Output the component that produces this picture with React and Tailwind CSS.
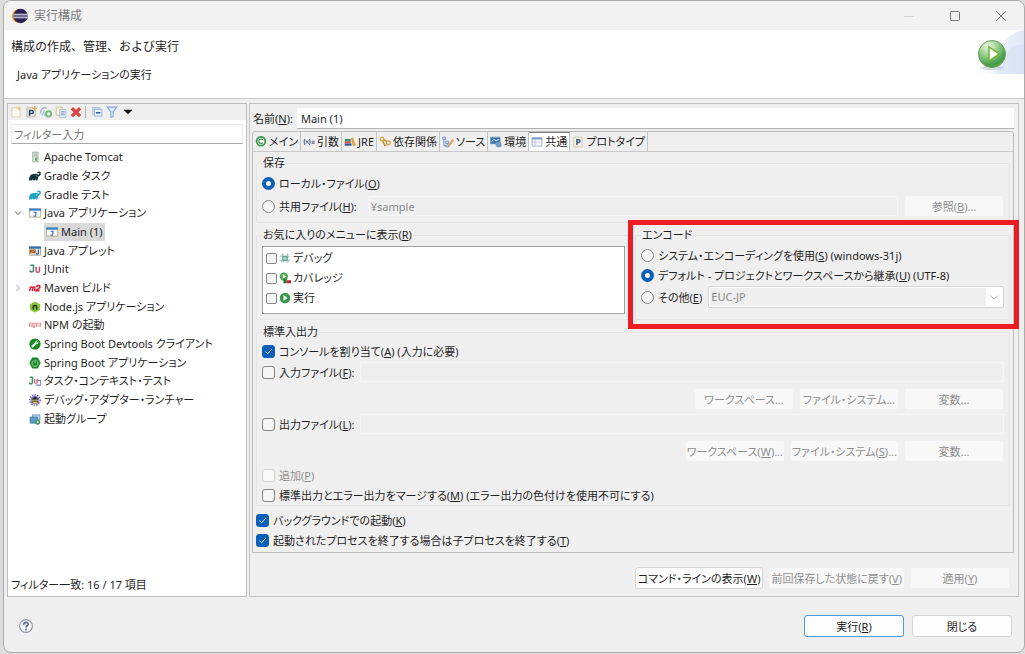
import React, { useState } from 'react';

// Renders a label and underlines its access key, e.g. "適用(Y)"
const Label = ({ text }) => {
    const m = text.match(/^(.*?\()([A-Z])(\).*)$/);
    if (!m) return <>{text}</>;
    return <>{m[1]}<u className="underline-offset-1">{m[2]}</u>{m[3]}</>;
};

const Svg = ({ children, size = 'size-3', box = '0 0 16 16' }) => (
    <svg viewBox={box} className={`${size} shrink-0`} fill="none" aria-hidden="true">{children}</svg>
);

const EclipseLogo = () => (
    <Svg size="size-4">
        <circle cx="7" cy="8" r="7" fill="#f7941e" />
        <circle cx="8.6" cy="8" r="7.2" fill="#2c2255" />
        <path d="M1.500 6.200h14.200M1.500 9.800h14.200" stroke="#e8e6f0" strokeWidth="1.100" />
        <path d="M1.300 8h14.500" stroke="#b9b4cf" strokeWidth="1.200" />
    </Svg>
);

const RunBanner = () => (
    <svg viewBox="0 0 48 44" className="h-11 w-12 shrink-0" fill="none" aria-hidden="true">
        <defs>
            <radialGradient id="ball" cx="0.35" cy="0.2" r="0.9">
                <stop offset="0" stopColor="#f0fae8" />
                <stop offset="0.45" stopColor="#8fca80" />
                <stop offset="0.8" stopColor="#3f9a4a" />
                <stop offset="1" stopColor="#6fc030" />
            </radialGradient>
            <linearGradient id="wave" x1="0" x2="1">
                <stop offset="0" stopColor="#fff" />
                <stop offset="1" stopColor="#dfe7f8" />
            </linearGradient>
        </defs>
        <path d="M0 44C16 38 22 4 48 0V44Z" fill="url(#wave)" />
        <path d="M20 44C26 20 34 16 48 14V44Z" fill="#d5e0f5" opacity="0.6" />
        <ellipse cx="16" cy="38" rx="12" ry="2" fill="#c9cfd4" opacity="0.7" />
        <circle cx="16" cy="24" r="13.5" fill="url(#ball)" stroke="#6c9a5c" />
        <path d="M13 17v14l10-7Z" fill="#fff" stroke="#6fb52c" strokeWidth="1.5" />
    </svg>
);

const PageIcon = () => (
    <Svg>
        <path d="M2.500 2.500h8l3 3v9h-11z" fill="#fffdf4" stroke="#cdc3a4" />
        <path d="M12 0v6M9 3h6" stroke="#e8c46c" strokeWidth="1.500" />
    </Svg>
);
const ProtoNewIcon = () => (
    <Svg>
        <path d="M2.500 2.500h8l3 3v9h-11z" fill="#f3f0e4" stroke="#a8a088" />
        <path d="M6 13V6h3a2 2 0 0 1 0 4H6" stroke="#26456e" strokeWidth="2" />
        <path d="M13 0v6M10 3h6" stroke="#d89f2c" strokeWidth="1.500" />
    </Svg>
);
const LinkProtoIcon = () => (
    <Svg>
        <path d="M1 10C0 4 5 1 9 3M3 12l3-6M6 13l2-4" stroke="#a9bcd4" strokeWidth="2" />
        <circle cx="11.500" cy="10.500" r="3.500" fill="#fff" stroke="#6dbb78" strokeWidth="2.500" />
    </Svg>
);
const CopyIcon = () => (
    <Svg>
        <path d="M1.500 1.500h8v11h-8z" fill="#f7f0d8" stroke="#c9b98a" />
        <path d="M6.500 4.500h8v11h-8z" fill="#e4edf8" stroke="#9db1cc" />
        <path d="M8 7.500h5M8 9.500h5M8 11.500h5" stroke="#6d8fc0" />
    </Svg>
);
const DeleteIcon = () => (
    <Svg><path d="M2.500 3l11 10.500M13.500 3l-11 10.500" stroke="#dc4444" strokeWidth="4.500" /></Svg>
);
const CollapseIcon = () => (
    <Svg>
        <path d="M2.500 12V2.500H13" stroke="#a3bedd" strokeWidth="1.500" />
        <path d="M4.500 4.500h10v9h-10z" fill="#e8f1fb" stroke="#8fb0d8" strokeWidth="1.200" />
        <path d="M6.500 9h6" stroke="#2d5f9e" strokeWidth="1.800" />
    </Svg>
);
const FilterIcon = () => (
    <Svg><path d="M1.500 1.500h13L9.500 8v6l-3 1.500V8z" fill="#dcebfa" stroke="#86abd9" strokeWidth="1.500" /></Svg>
);

const TomcatIcon = () => (
    <Svg>
        <path d="M5 1.500h7v13H5z" fill="#e6ebe2" stroke="#8d9a8c" />
        <path d="M6.500 4h4M6.500 6.500h4" stroke="#7c8c83" />
        <path d="M8 8.500h3V13H8z" fill="#5cb85c" />
    </Svg>
);
const Elephant = ({ color }) => (
    <svg viewBox="0 0 16 14" className="h-3 w-3 shrink-0" aria-hidden="true">
        <path fill={color} d="M0 13C0 8 2 4 7 4.500c2-1 3.500-.5 5 .5 1.500.3 2.300-.8 1.600-1.700-.6-.7-1.500-.2-1.800.4L11 2.300C12 .7 14.500.6 15.500 2.300c1 2-.3 4.500-3 5.700L11.500 11v2H9.700c-.3-1.600-1.800-1.600-2.200 0H5.700c-.3-1.600-1.800-1.600-2.200 0z" />
        <path d="M9 6.500l2 .8" stroke="#fff" strokeWidth=".8" />
    </svg>
);
const JavaAppIcon = () => (
    <Svg>
        <path d="M.5 2.500h15v11H.5z" fill="#f5f9fb" stroke="#a59a6c" />
        <path d="M0 2h16v3H0z" fill="#3b83c4" />
        <path d="M6 7h4M9 7v4.500c0 1.200-2.500 1.200-3 0" stroke="#3c6ea6" strokeWidth="1.500" />
    </Svg>
);
const AppletIcon = () => (
    <Svg>
        <path d="M.5 2.500h15v11H.5z" fill="#e7f2fb" stroke="#968a62" />
        <path d="M0 2h16v3H0z" fill="#3273b4" />
        <path d="M1 6h8v5H1z" fill="#a65d21" />
        <path d="M2 11l6-4" stroke="#cf9344" strokeWidth="1.500" />
        <path d="M12.500 6v5c0 1.500-2.500 1.500-3 0" stroke="#28538a" strokeWidth="1.500" />
    </Svg>
);
const JUnitIcon = () => (
    <Svg>
        <path d="M2 3h5M6 3v7c0 2.500-4.500 2.500-5 0" stroke="#2e8b6d" strokeWidth="2" />
        <path d="M9.500 6v4.500c0 2.500 4.500 2.500 4.500 0V6M8.500 6h2M13 6h2" stroke="#d2425c" strokeWidth="1.800" />
    </Svg>
);
const MavenIcon = () => (
    <Svg>
        <path d="M1 12l1-6M2 8c1-2 3-2 3 0l-.6 4M5 8c1-2 3.300-2 3 0l-.6 4" stroke="#e3192d" strokeWidth="2" />
        <path d="M10 6.500C11 4 15 4.500 14.500 7c-.3 1.500-4 3-5 4.500H14" stroke="#e3192d" strokeWidth="2.100" />
    </Svg>
);
const NodeIcon = () => (
    <Svg>
        <path d="M8 .5l6.800 3.700v7.600L8 15.500l-6.800-3.700V4.200z" fill="#8cc63f" />
        <path d="M5.800 11.500V5.500M5.800 7c1-1.600 4.400-1.600 4.400.6v3.900" stroke="#26351b" strokeWidth="2" />
    </Svg>
);
const NpmIcon = () => (
    <Svg>
        <path d="M0 5h16v5H8v1.500H5V10H0z" fill="#e08a8e" />
        <path d="M2 9V6.500h2V9M6.500 10V6.500h2V9M11 9V6.500h3V9M12.500 6.500V9" stroke="#fff" />
    </Svg>
);
const DevtoolsIcon = () => (
    <Svg>
        <circle cx="8" cy="8" r="7.500" fill="#148a1f" />
        <path d="M4 12l5-5" stroke="#fff" strokeWidth="2.800" />
        <path d="M11.500 3.500L9.500 5.500l1 1 2-2c.8 3-2 4.300-4 3-1-2.500.5-4.500 3-4z" fill="#fff" />
    </Svg>
);
const BootIcon = () => (
    <Svg>
        <path d="M4.300.8h7.400L15.600 8l-3.900 7.200H4.300L.4 8z" fill="#178a26" />
        <path d="M6 5a4 4 0 1 0 4 0M8 3.500V8" stroke="#b5dcb5" strokeWidth="1.200" />
    </Svg>
);
const TaskTestIcon = () => (
    <Svg>
        <path d="M1 3h4M4.500 3v7c0 2.500-3.500 2.500-4 0" stroke="#3a9461" strokeWidth="2" />
        <path d="M7.500 5v4.500c0 2 3.500 2 3.500 0V5" stroke="#cf5a70" strokeWidth="1.600" />
        <path d="M10 7.500h5.500v6H9" stroke="#8a83c0" strokeWidth="1.500" />
    </Svg>
);
const DapIcon = () => (
    <Svg>
        <circle cx="8" cy="8" r="6" fill="#9a92d8" />
        <circle cx="8" cy="8" r="7" stroke="#5a52a8" strokeWidth="1.500" strokeDasharray="2 1.500" />
        <path d="M3.500 6l9 5M12.500 6l-9 5M8 4v3" stroke="#1c1c28" strokeWidth="1.500" />
        <ellipse cx="8" cy="9.500" rx="3" ry="3.200" fill="#edc52f" />
        <path d="M5.500 9.500h5" stroke="#1c1c28" strokeWidth="1.200" />
        <circle cx="8" cy="5.500" r="2.200" fill="#1c1c28" />
    </Svg>
);
const GroupIcon = () => (
    <Svg>
        <path d="M4.500 2.500h10v7h-10z" fill="#bfdcf2" stroke="#4685b8" />
        <path d="M1.500 5.500h10v8h-10z" fill="#5c9bcb" stroke="#35709f" />
        <circle cx="11.500" cy="12" r="3.500" fill="#3d9b50" />
        <path d="M10.500 10v4l3-2z" fill="#fff" />
    </Svg>
);

const MainTabIcon = () => (
    <Svg>
        <circle cx="8" cy="7" r="5.800" fill="#fff" stroke="#3f9a55" strokeWidth="2.500" />
        <path d="M10.500 5.300a3 3 0 1 0 0 3.400" stroke="#3f9a55" strokeWidth="1.700" />
    </Svg>
);
const ArgsIcon = () => (
    <Svg>
        <path d="M2.500 4Q.5 8 2.500 12M8.500 4q2 4 0 8M3.500 6l4 4M7.500 6l-4 4M11.500 7h4M11.500 9.500h4" stroke="#50658a" strokeWidth="1.400" />
    </Svg>
);
const JreIcon = () => (
    <Svg>
        <path d="M1 4h8v3H1z" fill="#2f8f83" />
        <path d="M1 7h8v3H1z" fill="#d7533f" />
        <path d="M1 10h9v3H1z" fill="#31618f" />
        <path d="M9 3l3-1 4 11h-4z" fill="#e0a53a" />
    </Svg>
);
const DepsIcon = () => (
    <Svg>
        <circle cx="4" cy="4" r="2.500" stroke="#dba63a" strokeWidth="1.800" />
        <circle cx="12.500" cy="9" r="2.500" stroke="#dba63a" strokeWidth="1.800" />
        <path d="M5 6.500l3 7M7 5l3.500 2.500M8 13l2-1" stroke="#c68c25" strokeWidth="1.800" />
    </Svg>
);
const SourceIcon = () => (
    <Svg>
        <path d="M1 1.500h4v3H1zM5 7h4v3H5zM5 12h4v2.500H5zM2.500 4.500V13H5" fill="#d6e4f4" stroke="#5a80b8" />
        <path d="M9 13l6-8" stroke="#e3a65a" strokeWidth="3" />
    </Svg>
);
const EnvIcon = () => (
    <Svg>
        <path d="M.5 1.500h13v9H.5z" fill="#3f78b0" stroke="#7f98b5" />
        <path d="M2 7.500l3-3 3 2 4-2" stroke="#cfe3f5" strokeWidth="1.300" />
        <ellipse cx="11.500" cy="11.500" rx="4" ry="3.500" fill="#6e9cc9" />
    </Svg>
);
const CommonIcon = () => (
    <Svg>
        <path d="M1.500 2.500h13v11h-13z" fill="#f6fafd" stroke="#8498b5" />
        <path d="M1 2h14v2.500H1z" fill="#7b9dcc" />
        <path d="M5.500 4v9.500M1.500 8h13" stroke="#b3c2d6" />
    </Svg>
);
const ProtoIcon = () => (
    <Svg>
        <path d="M2.500 1.500h11v13h-11z" fill="#f8f4e4" stroke="#c5bb97" />
        <path d="M6.500 12V5H9a1.800 1.800 0 0 1 0 3.600H6.500" stroke="#34557f" strokeWidth="1.800" />
    </Svg>
);

const DebugIcon = () => (
    <Svg>
        <path d="M1 5.500l13 1M1 11h13M5 2l1.500 12M11 2l-.5 12M3 3l10 10M13 3.500l-10 10" stroke="#7fb5a8" strokeWidth="1.300" />
        <ellipse cx="8" cy="8.500" rx="3.500" ry="3" fill="#9fd0bd" stroke="#4d8f86" />
    </Svg>
);
const CoverageIcon = () => (
    <Svg>
        <circle cx="6.500" cy="6" r="5.500" fill="#4fa750" />
        <path d="M5 3v6l4.500-3z" fill="#fff" />
        <path d="M6 9.500h4V15H6z" fill="#117a1c" />
        <path d="M10 11h6v4h-6z" fill="#c8202c" />
    </Svg>
);
const RunIcon = () => (
    <Svg>
        <circle cx="8" cy="8" r="7" fill="#37964a" />
        <path d="M6 4v8l5.500-4z" fill="#fff" />
    </Svg>
);

const tree = [
    { label: 'Apache Tomcat', icon: <TomcatIcon /> },
    { label: 'Gradle タスク', icon: <Elephant color="#12343f" /> },
    { label: 'Gradle テスト', icon: <Elephant color="#1ba4c4" /> },
    { label: 'Java アプリケーション', icon: <JavaAppIcon />, open: true },
    { label: 'Main (1)', icon: <JavaAppIcon />, child: true },
    { label: 'Java アプレット', icon: <AppletIcon /> },
    { label: 'JUnit', icon: <JUnitIcon /> },
    { label: 'Maven ビルド', icon: <MavenIcon />, open: false },
    { label: 'Node.js アプリケーション', icon: <NodeIcon /> },
    { label: 'NPM の起動', icon: <NpmIcon /> },
    { label: 'Spring Boot Devtools クライアント', icon: <DevtoolsIcon /> },
    { label: 'Spring Boot アプリケーション', icon: <BootIcon /> },
    { label: 'タスク・コンテキスト・テスト', icon: <TaskTestIcon /> },
    { label: 'デバッグ・アダプター・ランチャー', icon: <DapIcon /> },
    { label: '起動グループ', icon: <GroupIcon /> },
];

const tabs = [
    { label: 'メイン', icon: <MainTabIcon /> },
    { label: '引数', icon: <ArgsIcon /> },
    { label: 'JRE', icon: <JreIcon /> },
    { label: '依存関係', icon: <DepsIcon /> },
    { label: 'ソース', icon: <SourceIcon /> },
    { label: '環境', icon: <EnvIcon /> },
    { label: '共通', icon: <CommonIcon /> },
    { label: 'プロトタイプ', icon: <ProtoIcon /> },
];

const favorites = [
    { label: 'デバッグ', icon: <DebugIcon /> },
    { label: 'カバレッジ', icon: <CoverageIcon /> },
    { label: '実行', icon: <RunIcon /> },
];

const Chevron = ({ open }) => (
    <Svg size="size-2" box="0 0 8 8">
        <path d={open ? 'M1 2.500l3 3 3-3' : 'M2.500 1l3 3-3 3'} stroke={open ? '#555' : '#999'} />
    </Svg>
);

const Check = ({ label, ...props }) => (
    <label className={`flex items-center gap-1 ${props.disabled ? 'text-[#8f8f8f]' : ''}`}>
        <span className="relative grid place-items-center">
            <input
                type="checkbox"
                className="peer size-[13px] appearance-none rounded-[3px] border border-[#868686] bg-[#f5f5f5] checked:border-[#0a5fb8] checked:bg-[#0a5fb8] disabled:border-[#d0d0d0] disabled:bg-[#f9f9f9]"
                {...props}
            />
            <svg viewBox="0 0 10 10" className="pointer-events-none absolute hidden size-[9px] peer-checked:block" fill="none" aria-hidden="true">
                <path d="M1.500 5l2.500 2.500 4.500-5" stroke="#fff" />
            </svg>
        </span>
        <span className="pt-px"><Label text={label} /></span>
    </label>
);

const Radio = ({ label, ...props }) => (
    <label className="flex items-center gap-1">
        <input
            type="radio"
            className="size-[13px] shrink-0 appearance-none rounded-full border border-[#868686] bg-[#f5f5f5] checked:border-4 checked:border-[#0a5fb8] checked:bg-white"
            {...props}
        />
        <span className="pt-px"><Label text={label} /></span>
    </label>
);

const Button = ({ label, primary, wide = 'w-[100px]', ...props }) => (
    <button
        type="button"
        className={`h-[22px] shrink-0 rounded-[3px] border bg-[#fdfdfd] pt-px leading-4 whitespace-nowrap disabled:border-[#f0f0f0] disabled:bg-[#f8f8f8] disabled:text-[#8f8f8f] ${wide} ${primary ? 'border-[#4a9be0]' : 'border-[#d5d5d5]'}`}
        {...props}
    >
        <Label text={label} />
    </button>
);

const Group = ({ title, children }) => (
    <fieldset className="relative min-w-0 rounded-[2px] border border-[#e4e4e4] px-[5px]">
        <legend className="h-4 px-px leading-4"><Label text={title} /></legend>
        {children}
    </fieldset>
);

const field = 'h-5 min-w-0 flex-1 border border-[#f6f6f6] bg-[#efefef] px-px text-[#8a8a8a]';

const App = () => {
    const [selected, setSelected] = useState('Main (1)');
    const [tab, setTab] = useState('共通');

    return (
        <div className="flex min-h-screen flex-col bg-[#dcdcdc] pb-px pl-[3px] font-['Noto_Sans','Noto_Sans_CJK_JP',sans-serif] text-[11px] leading-4 text-[#1f1f1f] [font-feature-settings:'palt']">
            <div className="flex flex-1 flex-col overflow-hidden rounded-lg border border-[#ababab] bg-[#efefef]">
                {/* Title bar */}
                <div className="flex h-[29px] items-center bg-[#f2f2f2] pr-[18px] pl-2 text-xs text-[#7c7c7c]">
                    <EclipseLogo />
                    <span className="ml-[6px]">実行構成</span>
                    <div className="ml-auto flex items-center gap-9">
                        <button type="button" aria-label="最小化" disabled>
                            <Svg size="size-[10px]" box="0 0 10 10"><path d="M0 5.500h10" stroke="#d4d4d4" /></Svg>
                        </button>
                        <button type="button" aria-label="最大化">
                            <Svg size="size-[10px]" box="0 0 10 10"><rect x=".5" y=".5" width="9" height="9" rx="1" stroke="#777" /></Svg>
                        </button>
                        <button type="button" aria-label="ウィンドウを閉じる">
                            <Svg size="size-[10px]" box="0 0 10 10"><path d="M0 0l10 10M10 0L0 10" stroke="#777" /></Svg>
                        </button>
                    </div>
                </div>

                {/* Header */}
                <header className="flex h-[69px] items-start justify-between border-b border-[#c8c8c8] bg-white">
                    <div className="pt-[9px] pl-[7px]">
                        <h1 className="text-xs leading-4 [font-feature-settings:normal]">構成の作成、管理、および実行</h1>
                        <p className="mt-3 pl-[6px]">Java アプリケーションの実行</p>
                    </div>
                    <RunBanner />
                </header>

                {/* Body */}
                <main className="flex flex-1 gap-[2px] pt-1 pr-[5px] pl-[3px]">
                    <aside className="flex w-60 shrink-0 flex-col border border-[#bdbdbd] bg-white">
                        <div className="flex h-4 items-center gap-[3px] bg-[#efefef] pl-[2px]">
                            <button type="button" aria-label="新規構成"><PageIcon /></button>
                            <button type="button" aria-label="新規プロトタイプ"><ProtoNewIcon /></button>
                            <button type="button" aria-label="エクスポート"><LinkProtoIcon /></button>
                            <button type="button" aria-label="複製"><CopyIcon /></button>
                            <button type="button" aria-label="削除"><DeleteIcon /></button>
                            <span className="h-3 w-px bg-[#b5b5b5]" />
                            <button type="button" aria-label="すべて縮小" className="ml-[2px]"><CollapseIcon /></button>
                            <button type="button" aria-label="フィルター"><FilterIcon /></button>
                            <button type="button" aria-label="フィルター・メニュー" className="ml-px">
                                <Svg><path d="M2 5h12L8 11z" fill="#111" /></Svg>
                            </button>
                        </div>
                        <input
                            type="text"
                            aria-label="フィルター入力"
                            placeholder="フィルター入力"
                            className="mx-[3px] mt-1 h-5 border border-[#ececec] border-b-[#a8a8a8] px-[2px] placeholder:text-[#757575]"
                        />
                        <ul className="mt-1 flex h-[280px] flex-col">
                            {tree.map((item) => (
                                <li key={item.label} className="flex flex-1 items-center">
                                    <button
                                        type="button"
                                        onClick={() => setSelected(item.label)}
                                        className={`flex items-center ${item.child ? 'pl-9' : 'pl-[6px]'}`}
                                    >
                                        {!item.child && (
                                            <span className="w-[15px]">{'open' in item && <Chevron open={item.open} />}</span>
                                        )}
                                        <span className={`flex h-[18px] items-center gap-[3px] ${selected === item.label ? 'bg-[#d9d9d9] pr-[2px]' : ''} ${item.child ? 'pl-[2px]' : ''}`}>
                                            {item.icon}
                                            {item.label}
                                        </span>
                                    </button>
                                </li>
                            ))}
                        </ul>
                        <p className="mt-auto pb-[3px] pl-[3px]">フィルター一致: 16 / 17 項目</p>
                    </aside>

                    <section className="flex min-w-0 flex-1 flex-col border border-[#c4c4c4] pt-1 pr-1 pl-[2px]">
                        <label className="flex items-center gap-1 pl-px">
                            <span><Label text="名前(N):" /></span>
                            <input type="text" defaultValue="Main (1)" className="h-[21px] min-w-0 flex-1 border-b border-[#b0b0b0] bg-white px-1" />
                        </label>

                        <div className="mt-[2px] rounded-t-[3px] border border-[#bdbdbd]">
                            <div className="flex h-5 border-b border-[#c8c8c8]" role="tablist">
                                {tabs.map((t) => (
                                    <button
                                        key={t.label}
                                        type="button"
                                        role="tab"
                                        aria-selected={tab === t.label}
                                        onClick={() => setTab(t.label)}
                                        className={`flex items-center gap-[2px] border-r border-[#c4c4c4] px-[2px] ${tab === t.label ? 'border-t border-t-[#808080] bg-white' : ''}`}
                                    >
                                        {t.icon}
                                        {t.label}
                                    </button>
                                ))}
                            </div>

                            <div className="flex flex-col gap-1 px-[3px] pt-[3px] pb-[2px]">
                                <Group title="保存">
                                    <div className="flex flex-col gap-[2px] pt-[2px] pb-[5px]">
                                        <div className="flex h-5 items-center">
                                            <Radio name="save" label="ローカル・ファイル(O)" defaultChecked />
                                        </div>
                                        <div className="flex h-[22px] items-center">
                                            <Radio name="save" label="共用ファイル(H):" />
                                            <input type="text" aria-label="共用ファイル" defaultValue="¥sample" disabled className={`${field} mr-[6px] ml-3`} />
                                            <Button label="参照(B)..." disabled />
                                        </div>
                                    </div>
                                </Group>

                                <div className="grid grid-cols-2 gap-1">
                                    <Group title="お気に入りのメニューに表示(R)">
                                        <div className="pt-[3px] pb-[5px]">
                                            <ul className="flex h-[68px] flex-col border border-[#a0a0a0] bg-white pt-px pl-[3px]">
                                                {favorites.map((f) => (
                                                    <li key={f.label}>
                                                        <label className="flex h-5 items-center gap-[2px]">
                                                            <input type="checkbox" className="size-[11px] appearance-none rounded-[2px] border border-[#868686] bg-[#f5f5f5] checked:bg-[#0a5fb8]" />
                                                            {f.icon}
                                                            <span>{f.label}</span>
                                                        </label>
                                                    </li>
                                                ))}
                                            </ul>
                                        </div>
                                    </Group>

                                    <Group title="エンコード">
                                        <div className="flex flex-col pt-[2px]">
                                            <div className="flex h-5 items-center">
                                                <Radio name="enc" label="システム・エンコーディングを使用(S) (windows-31j)" />
                                            </div>
                                            <div className="flex h-5 items-center">
                                                <Radio name="enc" label="デフォルト - プロジェクトとワークスペースから継承(U) (UTF-8)" defaultChecked />
                                            </div>
                                            <div className="mt-px flex h-[22px] items-center gap-[6px]">
                                                <Radio name="enc" label="その他(E)" />
                                                <div className="flex h-[22px] flex-1 items-center rounded-[2px] border border-[#d6d6d6] bg-white p-px pr-1">
                                                    <select aria-label="エンコード" disabled className="h-[18px] flex-1 appearance-none bg-[#efefef] px-px text-[#8a8a8a]">
                                                        <option>EUC-JP</option>
                                                    </select>
                                                    <span className="w-[13px] pl-1">
                                                        <Svg size="size-2" box="0 0 8 8"><path d="M0 2.500l4 3.500 4-3.500" stroke="#b5b5b5" /></Svg>
                                                    </span>
                                                </div>
                                            </div>
                                        </div>
                                        {/* Highlight frame */}
                                        <div className="pointer-events-none absolute -top-[23px] -right-[10px] -bottom-[10px] -left-2 border-[5px] border-[#ed1c24]" />
                                    </Group>
                                </div>

                                <Group title="標準入出力">
                                    <div className="pt-px">
                                        <div className="flex h-5 items-center">
                                            <Check label="コンソールを割り当て(A) (入力に必要)" defaultChecked />
                                        </div>
                                        <div className="flex h-[22px] items-center gap-[6px]">
                                            <Check label="入力ファイル(F):" />
                                            <input type="text" aria-label="入力ファイル" disabled className={field} />
                                        </div>
                                        <div className="flex h-[30px] justify-end gap-[5px] pt-[5px]">
                                            <Button label="ワークスペース..." disabled />
                                            <Button label="ファイル・システム..." disabled />
                                            <Button label="変数..." disabled />
                                        </div>
                                        <div className="flex h-[22px] items-center gap-[6px]">
                                            <Check label="出力ファイル(L):" />
                                            <input type="text" aria-label="出力ファイル" disabled className={field} />
                                        </div>
                                        <div className="flex h-[30px] justify-end gap-[5px] pt-[5px]">
                                            <Button label="ワークスペース(W)..." disabled />
                                            <Button label="ファイル・システム(S)..." wide="px-px" disabled />
                                            <Button label="変数..." disabled />
                                        </div>
                                        <div className="flex h-5 items-center">
                                            <Check label="追加(P)" disabled />
                                        </div>
                                        <div className="flex h-5 items-center">
                                            <Check label="標準出力とエラー出力をマージする(M) (エラー出力の色付けを使用不可にする)" />
                                        </div>
                                    </div>
                                </Group>

                                <div>
                                    <div className="flex h-5 items-center">
                                        <Check label="バックグラウンドでの起動(K)" defaultChecked />
                                    </div>
                                    <div className="flex h-5 items-center">
                                        <Check label="起動されたプロセスを終了する場合は子プロセスを終了する(T)" defaultChecked />
                                    </div>
                                </div>
                            </div>
                        </div>

                        <div className="mt-auto flex justify-end gap-[5px] pt-3 pr-1 pb-[7px]">
                            <Button label="コマンド・ラインの表示(W)" wide="px-[2px]" />
                            <Button label="前回保存した状態に戻す(V)" wide="px-[2px]" disabled />
                            <Button label="適用(Y)" disabled />
                        </div>
                    </section>
                </main>

                {/* Footer */}
                <footer className="flex h-[55px] items-center gap-2 pt-[3px] pr-3 pl-[15px]">
                    <button type="button" aria-label="ヘルプ" className="mr-auto">
                        <Svg size="size-[14px]">
                            <circle cx="8" cy="8" r="7.300" fill="#f7f9fc" stroke="#8792a8" strokeWidth="1.200" />
                            <path d="M5.500 6.500c0-3.500 5-3.300 5-.5 0 1.800-2.500 1.700-2.500 3.700M8 11v2" stroke="#5b6b8c" strokeWidth="1.900" />
                        </Svg>
                    </button>
                    <Button label="実行(R)" primary />
                    <Button label="閉じる" />
                </footer>
            </div>
        </div>
    );
};

export default App;
